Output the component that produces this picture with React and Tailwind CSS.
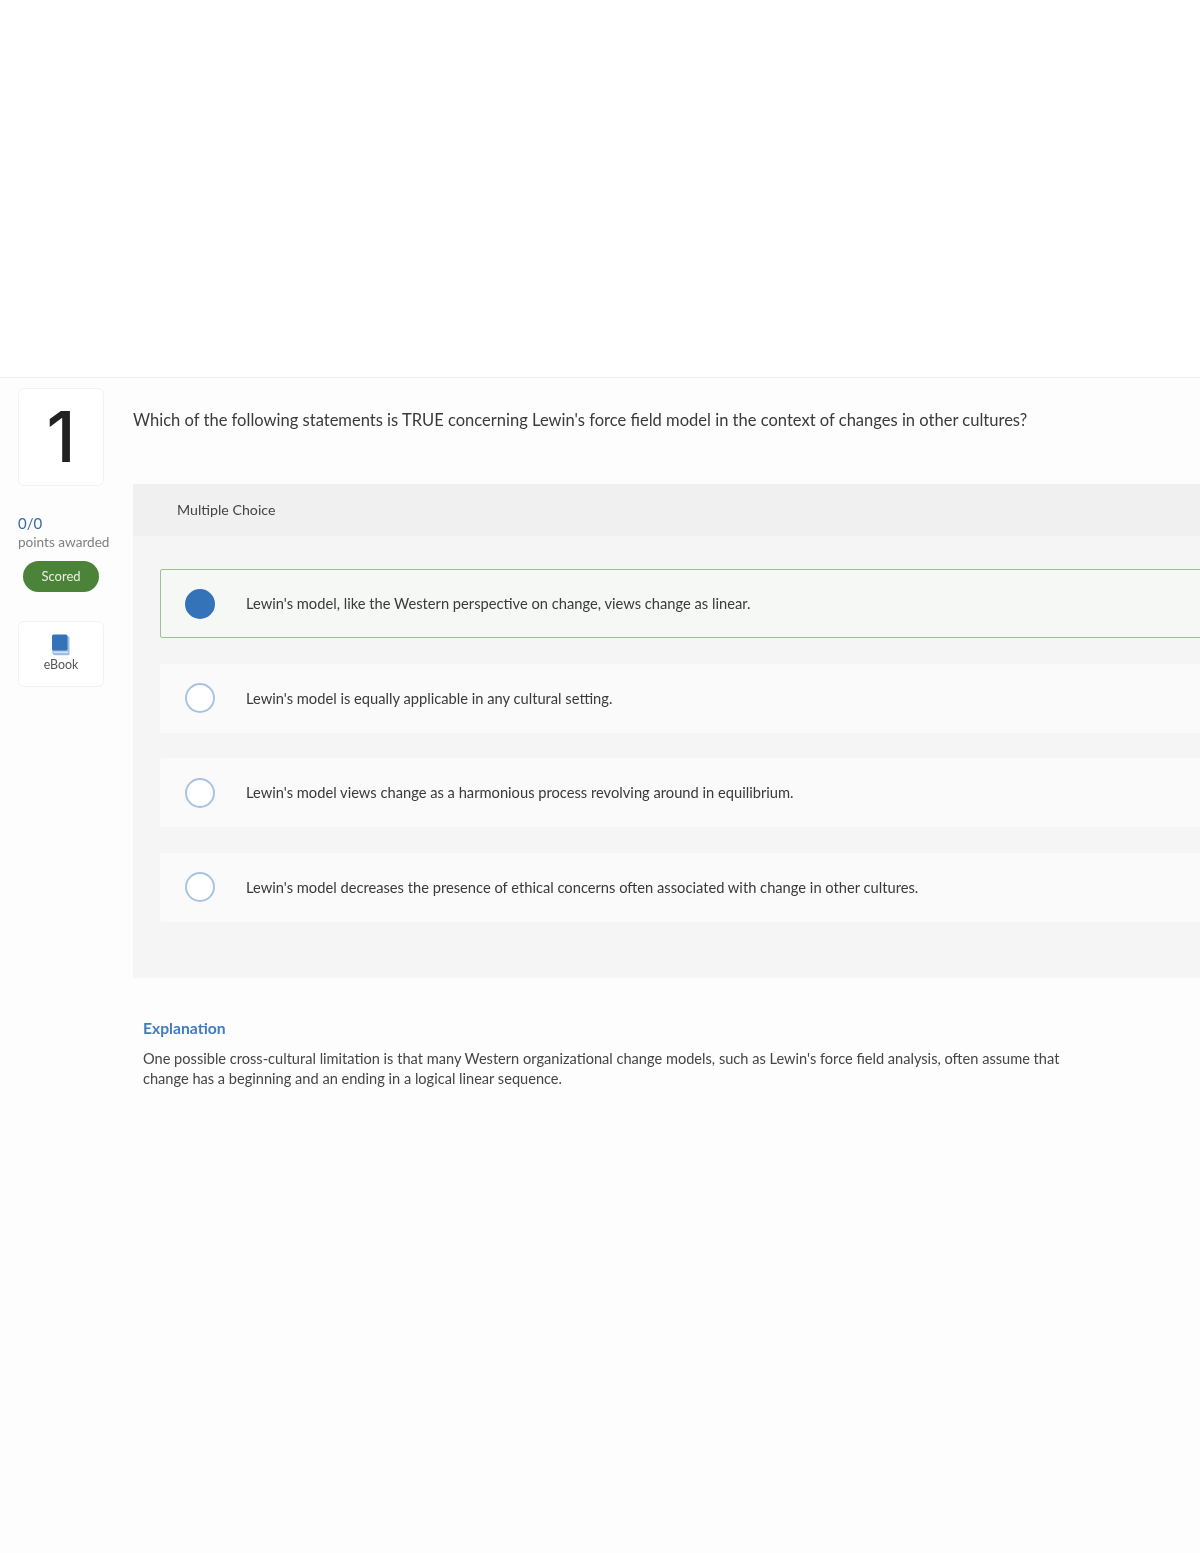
const options = [
  "Lewin's model, like the Western perspective on change, views change as linear.",
  "Lewin's model is equally applicable in any cultural setting.",
  "Lewin's model views change as a harmonious process revolving around in equilibrium.",
  "Lewin's model decreases the presence of ethical concerns often associated with change in other cultures.",
];

function BookIcon() {
  return (
    <svg width="20" height="22" viewBox="0 0 20 22" aria-hidden="true">
      <path d="M3 2.5h14.5a1 1 0 0 1 1 1V20a1.2 1.2 0 0 1-1.2 1.2H4A2.6 2.6 0 0 1 1.4 18.6V4z" fill="#9dbde2" />
      <rect x="1" y="0.5" width="15.5" height="16" rx="1.6" fill="#3573b9" />
      <path d="M2.6 18.2h14.6" stroke="#eef3f9" strokeWidth="1" />
    </svg>
  );
}

function Option({ text, selected }) {
  return (
    <div
      className={
        selected
          ? "flex items-center h-[69px] w-[1100px] rounded-[2px] border border-[#9cc194] bg-[#f6f8f5]"
          : "flex items-center h-[69px] w-[1100px] rounded-[2px] border border-transparent bg-[#fafafa]"
      }
    >
      <span
        className={
          selected
            ? "ml-[24px] w-[30px] h-[30px] shrink-0 rounded-full bg-[#3573b9] border-2 border-[#3573b9]"
            : "ml-[24px] w-[30px] h-[30px] shrink-0 rounded-full bg-white border-2 border-[#a9c3e0]"
        }
      />
      <span className="ml-[31px] -translate-y-[0.5px] text-[14.7px] text-[#3a3a3a]">{text}</span>
    </div>
  );
}

export default function App() {
  return (
    <div className="w-[1200px] h-[1553px] overflow-hidden bg-[#fdfdfd] blur-[0.45px] font-['Lato','Liberation_Sans',sans-serif]">
      <div className="h-[378px] bg-white border-b border-[#f0f0f0]" />
      <div className="flex">
        <aside className="w-[133px] shrink-0 pl-[18px]">
          <div className="mt-[10px] w-[86px] h-[98px] rounded-[6px] bg-white border border-[#f2f2f2] flex items-center justify-center font-['Inter',sans-serif] font-medium text-[70px] leading-none text-[#222222]">
            1
          </div>
          <div className="mt-[27px] text-[15px] leading-[20px] text-[#3a6aa6]">0/0</div>
          <div className="mt-[1px] text-[13.6px] leading-[17px] text-[#808080] whitespace-nowrap">points awarded</div>
          <div className="mt-[10px] ml-[5px] w-[76px] h-[31px] rounded-full bg-[#4b8438] flex items-center justify-center text-[13px] text-[#e8f0e4]">
            Scored
          </div>
          <div className="mt-[29px] w-[86px] h-[66px] rounded-[6px] bg-white border border-[#f2f2f2] flex flex-col items-center pt-[12px]">
            <BookIcon />
            <span className="text-[12.4px] leading-[16px] mt-[1px] text-[#555555]">eBook</span>
          </div>
        </aside>
        <main className="flex-1 min-w-0">
          <h1 className="pt-[31px] h-[106px] text-[16.55px] leading-[22px] font-normal text-[#3a3a3a] whitespace-nowrap">
            Which of the following statements is TRUE concerning Lewin's force field model in the context of changes in other cultures?
          </h1>
          <section className="h-[494px] bg-[#f5f5f5] rounded-tl-[2px]">
            <div className="h-[52px] bg-[#f0f0f0] flex items-center pl-[44px] pb-[1px] text-[14.2px] text-[#444444]">
              Multiple Choice
            </div>
            <div className="pt-[33px] pl-[27px] flex flex-col gap-[25.5px]">
              {options.map((t, i) => (
                <Option key={t} text={t} selected={i === 0} />
              ))}
            </div>
          </section>
          <div className="pl-[10px] pt-[40px] w-[940px]">
            <h2 className="text-[15.7px] leading-[20px] font-bold text-[#3f7cc0]">Explanation</h2>
            <p className="mt-[11px] text-[14.6px] leading-[20px] text-[#454545]">
              One possible cross-cultural limitation is that many Western organizational change models, such as Lewin's force field analysis, often assume that change has a beginning and an ending in a logical linear sequence.
            </p>
          </div>
        </main>
      </div>
    </div>
  );
}
